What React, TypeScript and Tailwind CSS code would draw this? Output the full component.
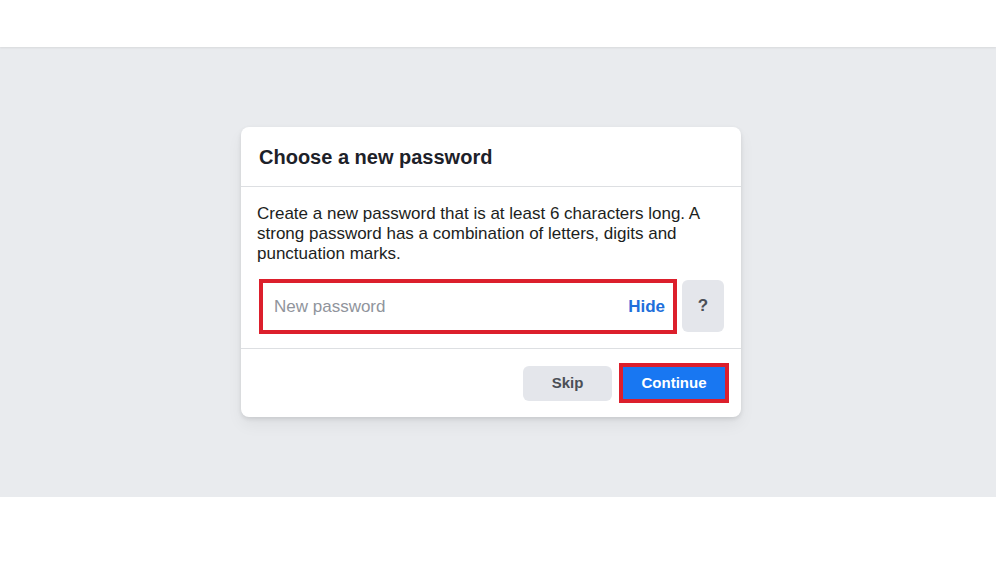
import React from "react";

export default function App() {
  return (
    <div className="w-[996px] h-[576px] bg-white flex flex-col" style={{ fontFamily: '"Liberation Sans", Arial, sans-serif' }}>
      <div className="h-[47px] bg-white shadow-[0_1px_2px_rgba(0,0,0,0.08)] relative z-10" />
      <div className="h-[450px] bg-[#e9ebee] flex justify-start pl-[241px] pt-[80px]">
        <div className="w-[500px] h-[290px] bg-white rounded-[8px] shadow-[0_2px_4px_rgba(0,0,0,0.1),0_8px_16px_rgba(0,0,0,0.05)] flex flex-col">
          <div className="h-[60px] px-[18px] flex items-center border-b border-[#dddfe2]">
            <h2 className="text-[20px] font-bold text-[#1d2129] leading-[24px]">Choose a new password</h2>
          </div>
          <div className="px-[16px] pt-[17px] pb-[14px] border-b border-[#dddfe2]">
            <p className="text-[17px] leading-[20px] text-[#1c1e21]">
              Create a new password that is at least 6 characters long. A strong password has a combination of letters, digits and punctuation marks.
            </p>
            <div className="flex mt-[15px] ml-[2px] gap-[5px]">
              <div className="w-[418px] h-[55px] border-[4px] border-[#dc1f2c] bg-white flex items-center justify-between pl-[11px] pr-[8px]">
                <span className="text-[17px] text-[#90949c]">New password</span>
                <span className="text-[17px] font-bold text-[#216fdb]">Hide</span>
              </div>
              <div className="w-[42px] h-[52px] mt-[1px] bg-[#e4e6eb] rounded-[6px] flex items-center justify-center text-[17px] font-bold text-[#4b4f56]">?</div>
            </div>
          </div>
          <div className="flex-1 flex items-center justify-end pr-[12px] gap-[7px]">
            <div className="w-[89px] h-[35px] bg-[#e4e6eb] rounded-[6px] flex items-center justify-center text-[15px] font-bold text-[#4b4f56]">Skip</div>
            <div className="w-[110px] h-[40px] border-[4px] border-[#dc1f2c] bg-[#1877f2] flex items-center justify-center text-[15px] font-bold text-white">Continue</div>
          </div>
        </div>
      </div>
      <div className="flex-1 bg-white" />
    </div>
  );
}
